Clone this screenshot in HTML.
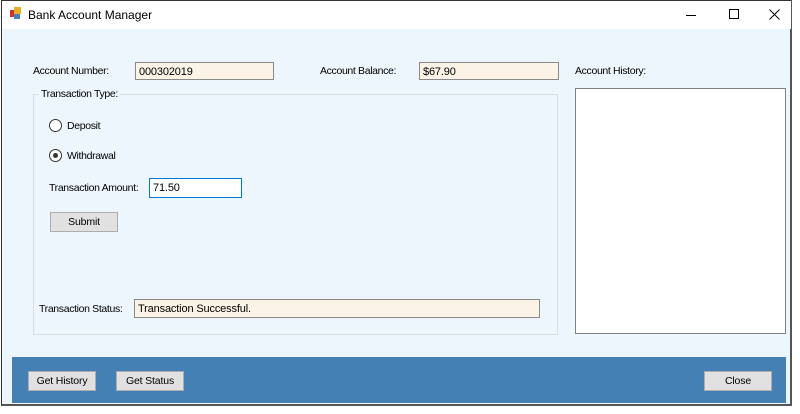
<!DOCTYPE html>
<html><head><style>
*{margin:0;padding:0;box-sizing:border-box}
body{width:800px;height:414px;background:#fff;position:relative;overflow:hidden;font-family:"Liberation Sans",sans-serif;font-size:10.5px;letter-spacing:-0.35px;color:#000}
.a{position:absolute}
.win{left:1px;top:0;width:791px;height:406px;border:1px solid #333;border-right:2px solid #555;border-bottom:2px solid #555;background:#eef6fd}
.tb{left:2px;top:1px;width:789px;height:28px;background:#fff}
.ro{background:#fbf3e6;border:1px solid #8a8a8a;height:18px;padding:3px 3px;font-size:11px;letter-spacing:-0.15px}
.btn{background:#e1e1e1;border:1px solid #adadad;text-align:center;font-size:10.5px;line-height:18px;letter-spacing:-0.15px}
.rad{width:13px;height:13px;border:1px solid #333;border-radius:50%;background:#fff}
</style></head><body>
<div class="a win"></div>
<div class="a tb"></div>
<div class="a" style="left:10px;top:10px;width:7px;height:7px;background:#c33"></div>
<div class="a" style="left:14px;top:7px;width:7px;height:7px;background:#e8b020"></div>
<div class="a" style="left:14px;top:14px;width:6px;height:5px;background:#4a7fc0"></div>
<div class="a" style="left:28px;top:8px;font-size:12px;letter-spacing:0">Bank Account Manager</div>
<div class="a" style="left:686px;top:15px;width:10px;height:1px;background:#000"></div>
<div class="a" style="left:729px;top:9px;width:10px;height:10px;border:1px solid #000"></div>
<svg class="a" style="left:769px;top:9px" width="11" height="11"><path d="M0.5 0.5L10.5 10.5M10.5 0.5L0.5 10.5" stroke="#000" stroke-width="1"/></svg>

<div class="a" style="left:33px;top:65px">Account Number:</div>
<div class="a ro" style="left:135px;top:62px;width:139px">000302019</div>
<div class="a" style="left:320px;top:65px">Account Balance:</div>
<div class="a ro" style="left:419px;top:62px;width:140px">$67.90</div>
<div class="a" style="left:575px;top:65px">Account History:</div>
<div class="a" style="left:575px;top:88px;width:211px;height:246px;background:#fff;border:1px solid #828282"></div>

<div class="a" style="left:33px;top:94px;width:525px;height:241px;border:1px solid #d5dfe5"></div>
<div class="a" style="left:39px;top:88px;background:#eef6fd;padding:0 2px">Transaction Type:</div>
<div class="a rad" style="left:49px;top:119px"></div>
<div class="a" style="left:67px;top:120px">Deposit</div>
<div class="a rad" style="left:49px;top:149px"></div>
<div class="a" style="left:53px;top:153px;width:5px;height:5px;border-radius:50%;background:#333"></div>
<div class="a" style="left:67px;top:150px">Withdrawal</div>
<div class="a" style="left:49px;top:182px">Transaction Amount:</div>
<div class="a" style="left:149px;top:178px;width:93px;height:20px;background:#fff;border:1px solid #0078d7;padding:3px 3px;font-size:11px;letter-spacing:-0.15px">71.50</div>
<div class="a btn" style="left:50px;top:212px;width:68px;height:20px">Submit</div>
<div class="a" style="left:39px;top:303px">Transaction Status:</div>
<div class="a ro" style="left:134px;top:299px;width:406px;height:19px">Transaction Successful.</div>

<div class="a" style="left:12px;top:357px;width:774px;height:46px;background:#4580b4"></div>
<div class="a btn" style="left:28px;top:371px;width:68px;height:20px">Get History</div>
<div class="a btn" style="left:116px;top:371px;width:68px;height:20px">Get Status</div>
<div class="a btn" style="left:704px;top:371px;width:68px;height:20px">Close</div>
</body></html>
